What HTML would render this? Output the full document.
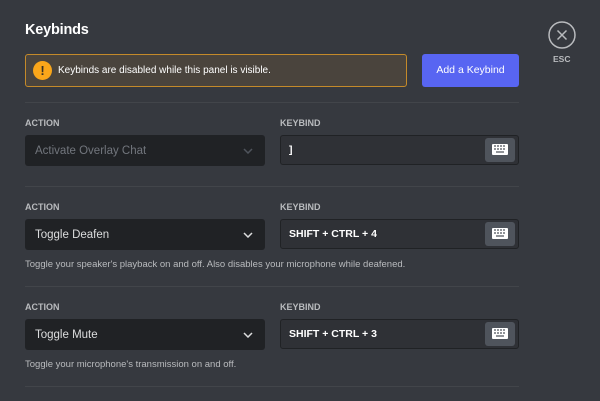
<!DOCTYPE html>
<html><head><meta charset="utf-8"><style>
*{margin:0;padding:0;box-sizing:border-box}
body{width:600px;height:401px;background:#36393f;font-family:"Liberation Sans",sans-serif;position:relative;overflow:hidden;color:#dcddde}
.a{position:absolute}
h1{position:absolute;left:25px;top:22px;font-size:14.5px;font-weight:bold;color:#fff;letter-spacing:-0.2px}
.warn{left:25px;top:54px;width:382px;height:33px;background:#4a443d;border:1px solid #c48a2a;border-radius:3px}
.warn .ic{position:absolute;left:7px;top:6px;width:19px;height:19px;border-radius:50%;background:#faa61a;color:#3a3021;font-weight:bold;font-size:13px;text-align:center;line-height:19px}
.warn span{position:absolute;left:32px;top:10px;font-size:10px;color:#fff}
.btn{left:422px;top:54px;width:97px;height:33px;background:#5865f2;border-radius:3px;color:#fff;font-size:10.5px;text-align:center;line-height:33px}
.sep{left:25px;width:494px;height:1px;background:#42454a}
.lbl{font-size:9px;font-weight:bold;color:#b9bbbe}
.sel{left:25px;width:240px;height:31px;background:#202225;border-radius:3px;font-size:11.5px;color:#dcddde;padding-left:10px;line-height:32px}
.sel svg{position:absolute;right:12px;top:13px}
.inp{left:280px;width:239px;height:30px;background:#2f3136;border:1px solid #202225;border-radius:3px;font-size:10.5px;font-weight:bold;color:#fff;padding-left:8px;line-height:28px}
.kb{position:absolute;right:3px;top:2px;width:30px;height:24px;background:#4f545c;border-radius:3px}
.kb svg{position:absolute;left:7px;top:6px}
.desc{left:25px;font-size:9.5px;color:#b9bbbe}
</style></head><body>
<h1>Keybinds</h1>
<div class="a warn"><div class="ic">!</div><span>Keybinds are disabled while this panel is visible.</span></div>
<div class="a btn">Add a Keybind</div>
<svg class="a" style="left:548px;top:21px" width="28" height="28"><circle cx="14" cy="14" r="13" fill="none" stroke="#b9bbbe" stroke-width="1.5"/><path d="M9.5 9.5L18.5 18.5M18.5 9.5L9.5 18.5" stroke="#b9bbbe" stroke-width="1.5"/></svg>
<div class="a lbl" style="left:553px;top:54px;font-size:8.5px">ESC</div>
<div class="a sep" style="top:102px"></div>

<div class="a lbl" style="left:25px;top:118px">ACTION</div>
<div class="a lbl" style="left:280px;top:118px">KEYBIND</div>
<div class="a sel" style="top:135px;color:#72767d">Activate Overlay Chat<svg width="10" height="6"><path d="M1 1L5 5L9 1" fill="none" stroke="#4f545c" stroke-width="1.5"/></svg></div>
<div class="a inp" style="top:135px">]<div class="kb"><svg width="16" height="12"><rect width="16" height="11" rx="1" fill="#fff"/><path d="M2 2h2M5 2h2M8 2h2M11 2h2M2 5h2M5 5h2M8 5h2M11 5h2M4 8h8" stroke="#4f545c" stroke-width="1.2"/></svg></div></div>
<div class="a sep" style="top:186px"></div>

<div class="a lbl" style="left:25px;top:202px">ACTION</div>
<div class="a lbl" style="left:280px;top:202px">KEYBIND</div>
<div class="a sel" style="top:219px">Toggle Deafen<svg width="10" height="6"><path d="M1 1L5 5L9 1" fill="none" stroke="#dcddde" stroke-width="1.5"/></svg></div>
<div class="a inp" style="top:219px">SHIFT + CTRL + 4<div class="kb"><svg width="16" height="12"><rect width="16" height="11" rx="1" fill="#fff"/><path d="M2 2h2M5 2h2M8 2h2M11 2h2M2 5h2M5 5h2M8 5h2M11 5h2M4 8h8" stroke="#4f545c" stroke-width="1.2"/></svg></div></div>
<div class="a desc" style="top:259px">Toggle your speaker's playback on and off. Also disables your microphone while deafened.</div>
<div class="a sep" style="top:286px"></div>

<div class="a lbl" style="left:25px;top:302px">ACTION</div>
<div class="a lbl" style="left:280px;top:302px">KEYBIND</div>
<div class="a sel" style="top:319px">Toggle Mute<svg width="10" height="6"><path d="M1 1L5 5L9 1" fill="none" stroke="#dcddde" stroke-width="1.5"/></svg></div>
<div class="a inp" style="top:319px">SHIFT + CTRL + 3<div class="kb"><svg width="16" height="12"><rect width="16" height="11" rx="1" fill="#fff"/><path d="M2 2h2M5 2h2M8 2h2M11 2h2M2 5h2M5 5h2M8 5h2M11 5h2M4 8h8" stroke="#4f545c" stroke-width="1.2"/></svg></div></div>
<div class="a desc" style="top:359px">Toggle your microphone's transmission on and off.</div>
<div class="a sep" style="top:386px"></div>
</body></html>
